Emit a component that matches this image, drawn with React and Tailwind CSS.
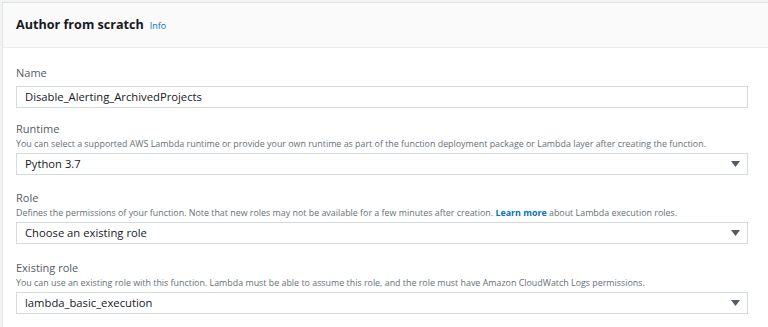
import React from 'react';

function Caret() {
    return (
        <svg className="w-[9px] h-[6px] text-[#545b64]" viewBox="0 0 9 6" fill="currentColor">
            <path d="M0 0h9L4.5 6z" />
        </svg>
    );
}

function Field({ label, hint, value, select, first, gap }) {
    return (
        <div className={first ? 'mt-[18px]' : gap}>
            <p className="text-[11px] leading-[14px] text-[#545b64]">{label}</p>
            {hint && <p className="text-[8.9px] leading-[13px] mt-[1px] text-[#687078]">{hint}</p>}
            <div className={`${hint ? 'mt-[3px]' : 'mt-[6px]'} h-[22px] border border-[#d5dbdb] bg-white flex items-center justify-between pl-[8px] pr-[7px] mr-[7px]`}>
                <span className="text-[11.25px] text-[#16191f]">{value}</span>
                {select && <Caret />}
            </div>
        </div>
    );
}

export default function App() {
    return (
        <div className="w-[768px] h-[327px] bg-[#f2f3f3] pt-[2px] pl-[2px] overflow-hidden" style={{ fontFamily: '"Open Sans", "Liberation Sans", sans-serif' }}>
            <div className="bg-white border-l border-t border-[#e1e4e4] h-[400px]">
                <div className="h-[45px] bg-[#fafafa] border-b border-[#eaeded] flex items-center px-[13px] gap-[6px]">
                    <h2 className="text-[12.6px] font-bold text-[#16191f]">Author from scratch</h2>
                    <span className="text-[9px] text-[#0073bb] mt-[2px]">Info</span>
                </div>
                <div className="px-[13px]">
                    <Field first label="Name" value="Disable_Alerting_ArchivedProjects" />
                    <Field
                        gap="mt-[14px]"
                        label="Runtime"
                        hint="You can select a supported AWS Lambda runtime or provide your own runtime as part of the function deployment package or Lambda layer after creating the function."
                        value="Python 3.7"
                        select
                    />
                    <Field
                        gap="mt-[16px]"
                        label="Role"
                        hint={<>Defines the permissions of your function. Note that new roles may not be available for a few minutes after creation. <span className="font-bold text-[#0073bb]">Learn more</span> about Lambda execution roles.</>}
                        value="Choose an existing role"
                        select
                    />
                    <Field
                        gap="mt-[17px]"
                        label="Existing role"
                        hint="You can use an existing role with this function. Lambda must be able to assume this role, and the role must have Amazon CloudWatch Logs permissions."
                        value="lambda_basic_execution"
                        select
                    />
                </div>
            </div>
        </div>
    );
}
